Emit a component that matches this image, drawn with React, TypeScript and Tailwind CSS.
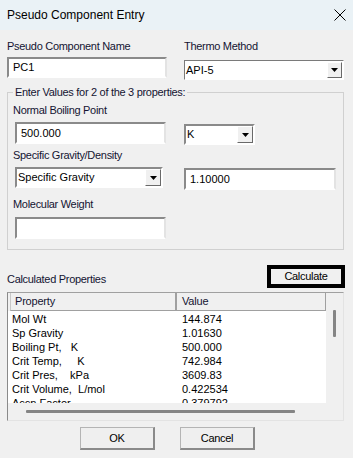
import React from "react";

const LBL = "text-[11px] leading-[14px] tracking-[-0.3px] text-[#141432]";

function Arrow() {
  return (
    <svg width="7" height="4" viewBox="0 0 7 4">
      <path d="M0 0 H7 L3.5 4 Z" fill="#000" />
    </svg>
  );
}

function DropBtn({ cls }: { cls: string }) {
  return (
    <div
      className={`${cls} shrink-0 bg-[#f0f0f0] border border-t-white border-l-white border-b-[#696969] border-r-[#696969] flex items-center justify-center`}
    >
      <Arrow />
    </div>
  );
}

function Row({ a, b }: { a: string; b: string }) {
  return (
    <div className="flex h-[14px] leading-[14px] text-[11px] text-black whitespace-pre">
      <div className="w-[174px] pl-[4px]">{a}</div>
      <div>{b}</div>
    </div>
  );
}

export default function App() {
  const rows: [string, string][] = [
    ["Mol Wt", "144.874"],
    ["Sp Gravity", "1.01630"],
    ["Boiling Pt,   K", "500.000"],
    ["Crit Temp,     K", "742.984"],
    ["Crit Pres,    kPa", "3609.83"],
    ["Crit Volume,  L/mol", "0.422534"],
    ["Accn Factor", "0.379792"],
  ];
  return (
    <div className="w-[353px] h-[458px] bg-[#f0f0f0] flex flex-col overflow-hidden font-['Liberation_Sans',Arial,sans-serif] text-black">
      {/* Title bar */}
      <div className="h-[30px] shrink-0 bg-[#eaf2f6] flex items-center justify-between pl-[7px] pr-[7px]">
        <span className="text-[12px] leading-[16px] text-black">Pseudo Component Entry</span>
        <svg width="12" height="12" viewBox="0 0 12 12">
          <path d="M0.5 0.5 L11.5 11.5 M11.5 0.5 L0.5 11.5" stroke="#000" strokeWidth="1" />
        </svg>
      </div>

      <div className="pl-[7px] pr-[9px] flex flex-col">
        {/* Row 1 */}
        <div className="grid grid-cols-[177px_1fr]">
          <div className="flex flex-col">
            <div className={`${LBL} mt-[9px]`}>Pseudo Component Name</div>
            <div className="mt-[4px] w-[160px] h-[21px] bg-white border-2 border-t-[#8a8a8a] border-l-[#8a8a8a] border-b-white border-r-[#e3e3e3] flex items-center pl-[4px] text-[11px] text-black">
              PC1
            </div>
          </div>
          <div className="flex flex-col">
            <div className={`${LBL} mt-[9px]`}>Thermo Method</div>
            <div className="mt-[7px] w-[160px] h-[20px] bg-white border border-t-[#7a7a7a] border-l-[#7a7a7a] border-b-white border-r-white flex items-center">
              <div className="flex-1 pl-[1px] text-[11px] text-black">API-5</div>
              <DropBtn cls="w-[15px] h-[16px] mr-[1px]" />
            </div>
          </div>
        </div>

        {/* Group box */}
        <div className="relative mt-[12px] h-[158px] border border-[#d0d0d0] flex flex-col">
          <div className={`absolute left-[5px] -top-[8px] bg-[#f0f0f0] px-[2px] ${LBL}`}>
            Enter Values for 2 of the 3 properties:
          </div>
          <div className={`${LBL} mt-[10px] ml-[5px]`}>Normal Boiling Point</div>
          <div className="flex items-start mt-[5px] ml-[7px]">
            <div className="w-[151px] h-[22px] bg-white border-2 border-t-[#8a8a8a] border-l-[#8a8a8a] border-b-white border-r-[#e3e3e3] flex items-center pl-[4px] text-[11px] text-black">
              500.000
            </div>
            <div className="ml-[18px] mt-[2px] w-[71px] h-[21px] bg-white border-2 border-t-[#8a8a8a] border-l-[#8a8a8a] border-b-white border-r-white flex items-center">
              <div className="flex-1 pl-[1px] text-[11px] text-black">K</div>
              <DropBtn cls="w-[16px] h-[17px]" />
            </div>
          </div>
          <div className={`${LBL} mt-[3px] ml-[5px]`}>Specific Gravity/Density</div>
          <div className="flex items-start mt-[5px] ml-[7px]">
            <div className="w-[148px] h-[21px] bg-white border-2 border-t-[#8a8a8a] border-l-[#8a8a8a] border-b-white border-r-white flex items-center">
              <div className="flex-1 pl-[1px] text-[11px] text-black">Specific Gravity</div>
              <DropBtn cls="w-[16px] h-[17px]" />
            </div>
            <div className="ml-[21px] mt-[1px] w-[152px] h-[22px] bg-white border-2 border-t-[#8a8a8a] border-l-[#8a8a8a] border-b-white border-r-[#e3e3e3] flex items-center pl-[4px] text-[11px] text-black">
              1.10000
            </div>
          </div>
          <div className={`${LBL} mt-[7px] ml-[5px]`}>Molecular Weight</div>
          <div className="mt-[6px] ml-[7px] w-[151px] h-[22px] bg-white border-2 border-t-[#8a8a8a] border-l-[#8a8a8a] border-b-white border-r-[#e3e3e3]" />
        </div>

        {/* Calculated properties header */}
        <div className="flex justify-between mt-[15px]">
          <div className={`${LBL} self-end mb-[2px]`}>Calculated Properties</div>
          <div className="w-[78px] h-[23px] -mr-[1px] border-[4px] border-black bg-[#f0f0f0] flex items-center justify-center text-[11px] tracking-[-0.3px] text-black">
            Calculate
          </div>
        </div>

        {/* List */}
        <div className="mt-[4px] h-[129px] border border-t-[#a0a0a0] border-l-[#8a8a8a] border-b-[#e3e3e3] border-r-[#e3e3e3] flex flex-col">
          <div className="flex h-[110px]">
            <div className="w-[318px] flex flex-col">
              <div className="h-[18px] shrink-0 bg-[#f0f0f0] flex pl-[2px] text-[11px] tracking-[-0.2px] text-[#141432]">
                <div className="w-[167px] border-l border-[#c8c8c8] border-r-2 border-r-[#a0a0a0] border-b border-b-[#a0a0a0] pl-[4px] flex items-center">
                  Property
                </div>
                <div className="flex-1 border-r border-r-[#a0a0a0] border-b border-b-[#a0a0a0] pl-[5px] flex items-center">
                  Value
                </div>
              </div>
              <div className="flex-1 bg-white overflow-hidden pt-[1px]">
                {rows.map(([a, b]) => (
                  <Row key={a} a={a} b={b} />
                ))}
              </div>
            </div>
            <div className="flex-1 bg-[#f0f0f0] pl-[7px] pt-[17px]">
              <div className="w-[3px] h-[27px] bg-[#858585] rounded-[1px]" />
            </div>
          </div>
          <div className="flex-1 bg-[#f0f0f0] pl-[18px] pt-[7px]">
            <div className="w-[269px] h-[3px] bg-[#858585] rounded-[1px]" />
          </div>
        </div>

        {/* Buttons */}
        <div className="flex mt-[6px] ml-[73px] gap-[25px]">
          <div className="w-[75px] h-[23px] bg-[#efefef] border border-t-[#b4b4b4] border-l-[#b4b4b4] border-b-2 border-r-2 border-b-[#8a8a8a] border-r-[#8a8a8a] flex items-center justify-center text-[11px] tracking-[-0.3px] text-black">
            OK
          </div>
          <div className="w-[75px] h-[23px] bg-[#efefef] border border-t-[#b4b4b4] border-l-[#b4b4b4] border-b-2 border-r-2 border-b-[#8a8a8a] border-r-[#8a8a8a] flex items-center justify-center text-[11px] tracking-[-0.3px] text-black">
            Cancel
          </div>
        </div>
      </div>
    </div>
  );
}
